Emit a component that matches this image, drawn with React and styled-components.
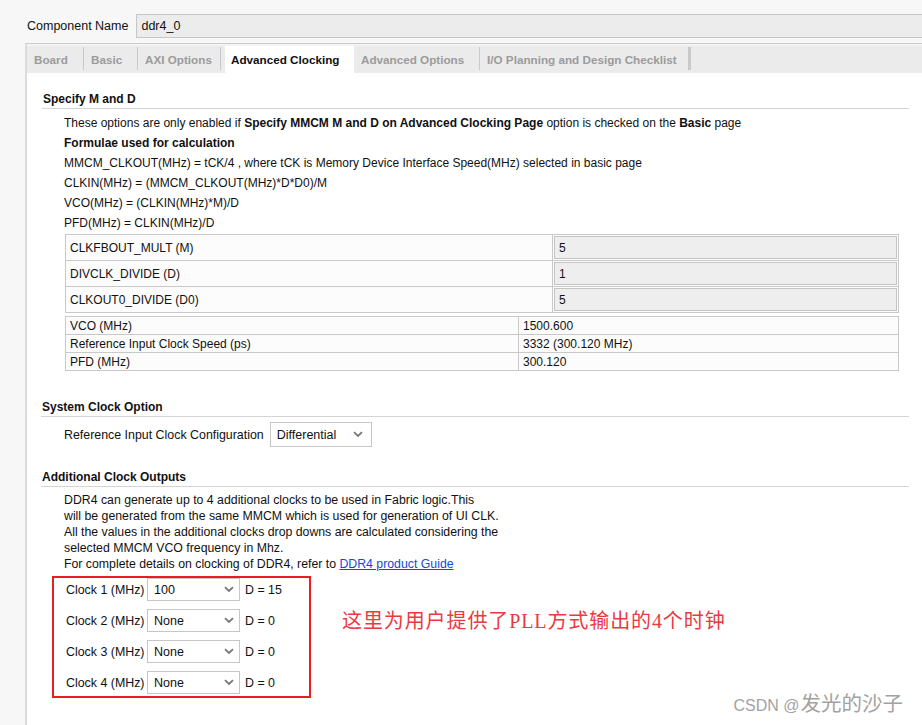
import React from "react";
import styled, { createGlobalStyle } from "styled-components";

const Global = createGlobalStyle`
  html, body { margin: 0; padding: 0; background: #f7f7f7; }
  body { font-family: "Liberation Sans", Arial, sans-serif; font-size: 12px; color: #111; }
  #root { min-height: 100vh; }
`;

const Page = styled.div`
  position: relative;
  height: 725px;
  width: 922px;
  overflow: hidden;
  display: flex;
  flex-direction: column;
  background: #f7f7f7;
`;

const Header = styled.div`
  display: flex;
  align-items: center;
  padding: 14px 0 5px 27px;
  gap: 7px;
`;

const NameLabel = styled.span`
  font-size: 12.5px;
  color: #111;
`;

const NameInput = styled.div`
  flex: 1;
  height: 22px;
  margin-left: 1px;
  border: 1px solid #c6c6c6;
  border-right: none;
  background: #ececec;
  display: flex;
  align-items: center;
  padding-left: 4px;
  font-size: 12.5px;
`;

const Frame = styled.div`
  flex: 1;
  margin-left: 25px;
  border-top: 1px solid #cbcbcb;
  border-left: 2px solid #dcdcdc;
  padding-top: 2px;
  display: flex;
  flex-direction: column;
  background: #f3f3f3;
`;

const TabBar = styled.div`
  display: flex;
  height: 27px;
  background: #ebebeb;
`;

const Tab = styled.div`
  width: ${(p) => p.$w}px;
  margin-left: ${(p) => p.$ml || 0}px;
  display: flex;
  align-items: center;
  padding-left: ${(p) => (p.$active ? 6 : 7)}px;
  box-sizing: border-box;
  font-weight: bold;
  font-size: 11.7px;
  color: ${(p) => (p.$active ? "#111" : "#9b9b9b")};
  background: ${(p) => (p.$active ? "#ffffff" : "transparent")};
  position: relative;
  &::after {
    content: "";
    display: ${(p) => (p.$sep ? "block" : "none")};
    position: absolute;
    right: 0;
    top: 1px;
    bottom: 3px;
    width: ${(p) => p.$sep || 1}px;
    background: #c9c9c9;
  }
`;

const Content = styled.div`
  flex: 1;
  background: #ffffff;
  padding: 0 13px 0 14px;
`;

const SectionTitle = styled.div`
  font-weight: bold;
  font-size: 12px;
  line-height: 16px;
  padding: 0 0 1px 1px;
  margin-top: ${(p) => p.$mt}px;
  margin-left: ${(p) => p.$ml || 0}px;
  border-bottom: 1px solid #d4d4d4;
`;

const Body = styled.div`
  padding-left: 23px;
  padding-right: 10px;
  font-size: ${(p) => p.$fs || 12}px;
`;

const Line = styled.div`
  line-height: ${(p) => p.$lh || 20}px;
  white-space: nowrap;
`;

const Lines = styled.div`
  margin-top: ${(p) => p.$mt}px;
`;

const Table = styled.div`
  margin-top: ${(p) => p.$mt}px;
  margin-left: 1px;
  border: 1px solid #c9c9c9;
  display: grid;
  grid-template-columns: ${(p) => p.$cols};
  background: #fcfcfc;
`;

const Cell = styled.div`
  display: flex;
  align-items: center;
  padding-left: ${(p) => p.$pl ?? 4}px;
  border-top: ${(p) => (p.$first ? "none" : "1px solid #c9c9c9")};
  border-left: ${(p) => (p.$value ? "1px solid #c9c9c9" : "none")};
  box-sizing: border-box;
  height: ${(p) => p.$h + (p.$first ? 0 : 1)}px;
`;

const ValueBox = styled.div`
  flex: 1;
  align-self: stretch;
  margin: 1px;
  border: 1px solid #c4c4c4;
  background: #eeeeee;
  display: flex;
  align-items: center;
  padding-left: 4px;
`;

const RefRow = styled.div`
  display: flex;
  align-items: center;
  gap: 6px;
  margin-top: 5px;
`;

const SelectBox = styled.div`
  width: ${(p) => p.$w}px;
  height: ${(p) => p.$h}px;
  box-sizing: border-box;
  border: 1px solid #c6c6c6;
  background: #fff;
  display: flex;
  align-items: center;
  justify-content: space-between;
  padding: 0 ${(p) => p.$pr}px 0 ${(p) => p.$pl}px;
  font-size: 12.5px;
`;

const Link = styled.a`
  color: #1149d8;
  text-decoration: underline;
`;

const ClockArea = styled.div`
  display: flex;
  align-items: flex-start;
  margin-top: 4px;
  margin-left: -12px;
`;

const RedBox = styled.div`
  width: 259px;
  box-sizing: border-box;
  border: 2px solid #ec1c24;
  padding: 0 0 2px 11px;
  display: flex;
  flex-direction: column;
  gap: 8px;
`;

const ClockRow = styled.div`
  display: flex;
  align-items: center;
  height: 23px;
  gap: 5px;
  font-size: 12.4px;
`;

const ClockLabel = styled.span`
  width: 76px;
  padding-left: 1px;
  white-space: nowrap;
`;

const Annotation = styled.div`
  margin-left: 31px;
  margin-top: 29px;
  color: #ea3a3f;
  font-family: "Liberation Serif", "Noto Sans CJK SC", serif;
  font-size: 20px;
  letter-spacing: 0.9px;
  white-space: nowrap;
`;

const Watermark = styled.div`
  position: absolute;
  right: 19px;
  bottom: 8px;
  color: #a2a2a2;
  font-family: "Liberation Sans", "Noto Sans CJK SC", sans-serif;
  white-space: nowrap;
  display: flex;
  align-items: baseline;
`;

const WmLatin = styled.span`
  font-size: 16px;
`;

const WmCjk = styled.span`
  font-size: 20.5px;
  margin-left: 1px;
`;

const Chevron = () => (
  <svg width="10" height="7" viewBox="0 0 10 7">
    <path d="M1 1.2 L5 5 L9 1.2" fill="none" stroke="#777" strokeWidth="1.8" />
  </svg>
);

const tabs = [
  { t: "Board", w: 57, sep: 1 },
  { t: "Basic", w: 54, sep: 1 },
  { t: "AXI Options", w: 83, sep: 1 },
  { t: "Advanced Clocking", w: 129, active: true, ml: 4 },
  { t: "Advanced Options", w: 126, sep: 1 },
  { t: "I/O Planning and Design Checklist", w: 211, sep: 3 },
];

const mdRows = [
  ["CLKFBOUT_MULT (M)", "5"],
  ["DIVCLK_DIVIDE (D)", "1"],
  ["CLKOUT0_DIVIDE (D0)", "5"],
];

const calcRows = [
  ["VCO (MHz)", "1500.600"],
  ["Reference Input Clock Speed (ps)", "3332 (300.120 MHz)"],
  ["PFD (MHz)", "300.120"],
];

const clocks = [
  ["Clock 1 (MHz)", "100", "D = 15"],
  ["Clock 2 (MHz)", "None", "D = 0"],
  ["Clock 3 (MHz)", "None", "D = 0"],
  ["Clock 4 (MHz)", "None", "D = 0"],
];

export default function App() {
  return (
    <Page>
      <Global />
      <Header>
        <NameLabel>Component Name</NameLabel>
        <NameInput>ddr4_0</NameInput>
      </Header>
      <Frame>
        <TabBar>
          {tabs.map((t) => (
            <Tab key={t.t} $w={t.w} $active={t.active} $sep={t.sep} $ml={t.ml}>
              {t.t}
            </Tab>
          ))}
        </TabBar>
        <Content>
          <SectionTitle $mt={18} $ml={1}>Specify M and D</SectionTitle>
          <Body>
            <Lines $mt={4}>
              <Line>
                These options are only enabled if <b>Specify MMCM M and D on Advanced Clocking Page</b> option is checked on the <b>Basic</b> page
              </Line>
              <Line><b>Formulae used for calculation</b></Line>
              <Line>MMCM_CLKOUT(MHz) = tCK/4 , where tCK is Memory Device Interface Speed(MHz) selected in basic page</Line>
              <Line>CLKIN(MHz) = (MMCM_CLKOUT(MHz)*D*D0)/M</Line>
              <Line>VCO(MHz) = (CLKIN(MHz)*M)/D</Line>
              <Line>PFD(MHz) = CLKIN(MHz)/D</Line>
            </Lines>
            <Table $mt={1} $cols="486px 1fr">
              {mdRows.map(([k, v], i) => (
                <React.Fragment key={k}>
                  <Cell $h={25} $first={i === 0}>{k}</Cell>
                  <Cell $h={25} $first={i === 0} $value $pl={0}>
                    <ValueBox>{v}</ValueBox>
                  </Cell>
                </React.Fragment>
              ))}
            </Table>
            <Table $mt={3} $cols="452px 1fr">
              {calcRows.map(([k, v], i) => (
                <React.Fragment key={k}>
                  <Cell $h={17} $first={i === 0}>{k}</Cell>
                  <Cell $h={17} $first={i === 0} $value>{v}</Cell>
                </React.Fragment>
              ))}
            </Table>
          </Body>
          <SectionTitle $mt={28}>System Clock Option</SectionTitle>
          <Body $fs={12.4}>
            <RefRow>
              <span>Reference Input Clock Configuration</span>
              <SelectBox $w={102} $h={25} $pl={6} $pr={8}>
                Differential <Chevron />
              </SelectBox>
            </RefRow>
          </Body>
          <SectionTitle $mt={22}>Additional Clock Outputs</SectionTitle>
          <Body $fs={12.3}>
            <Lines $mt={5}>
              <Line $lh={16}>DDR4 can generate up to 4 additional clocks to be used in Fabric logic.This</Line>
              <Line $lh={16}>will be generated from the same MMCM which is used for generation of UI CLK.</Line>
              <Line $lh={16}>All the values in the additional clocks drop downs are calculated considering the</Line>
              <Line $lh={16}>selected MMCM VCO frequency in Mhz.</Line>
              <Line $lh={16}>
                For complete details on clocking of DDR4, refer to <Link href="#">DDR4 product Guide</Link>
              </Line>
            </Lines>
            <ClockArea>
              <RedBox>
                {clocks.map(([l, v, d]) => (
                  <ClockRow key={l}>
                    <ClockLabel>{l}</ClockLabel>
                    <SelectBox $w={93} $h={23} $pl={6} $pr={5}>
                      {v} <Chevron />
                    </SelectBox>
                    <span>{d}</span>
                  </ClockRow>
                ))}
              </RedBox>
              <Annotation>这里为用户提供了PLL方式输出的4个时钟</Annotation>
            </ClockArea>
          </Body>
        </Content>
      </Frame>
      <Watermark>
        <WmLatin>CSDN @</WmLatin>
        <WmCjk>发光的沙子</WmCjk>
      </Watermark>
    </Page>
  );
}
